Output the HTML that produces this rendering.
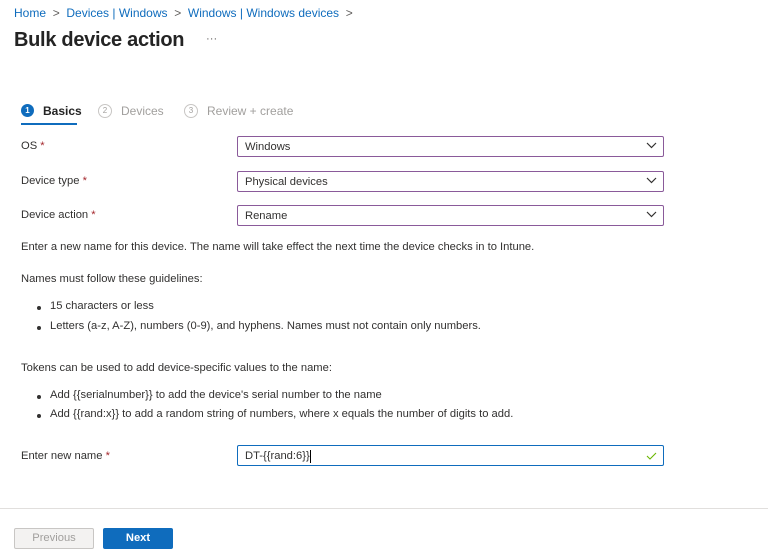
<!DOCTYPE html><html><head><style>
body{margin:0;width:768px;height:557px;background:#fff;font-family:"Liberation Sans",sans-serif;color:#323130;position:relative;overflow:hidden}
.a{position:absolute;white-space:nowrap;font-size:11.2px}
.bc{color:#0f6cbd;font-size:12px}
.req{color:#a4262c}
.dd{position:absolute;left:237px;height:19px;border:1px solid #8a5a9a;border-radius:2px;font-size:11.2px;line-height:20px;padding-left:7px;box-sizing:content-box;width:418px}
.chev{position:absolute;right:6px;top:5px}
.li::before{content:"";position:absolute;left:-13px;top:6px;width:4px;height:4px;border-radius:50%;background:#323130}
.circ{position:absolute;width:13px;height:13px;border-radius:50%;font-size:8px;line-height:13px;text-align:center}
</style></head><body>
<div class="a bc" style="left:14px;top:6px">Home &nbsp;<span style="color:#605e5c">&gt;</span>&nbsp; Devices | Windows &nbsp;<span style="color:#605e5c">&gt;</span>&nbsp; Windows | Windows devices &nbsp;<span style="color:#605e5c">&gt;</span></div>
<div class="a" style="left:14px;top:29px;font-size:20px;font-weight:bold;color:#242424;letter-spacing:-0.3px">Bulk device action</div>
<div class="a" style="left:206px;top:33px;color:#605e5c">···</div>
<div class="circ" style="left:21px;top:104px;background:#0f6cbd;color:#fff;font-weight:bold">1</div>
<div class="a" style="left:43px;top:104px;font-weight:bold;color:#242424;font-size:12px">Basics</div>
<div style="position:absolute;left:21px;top:123px;width:56px;height:2px;background:#0f6cbd"></div>
<div class="circ" style="left:98px;top:104px;border:1px solid #c8c6c4;color:#a19f9d;width:12px;height:12px;line-height:12px">2</div>
<div class="a" style="left:121px;top:104px;color:#a19f9d;font-size:12px">Devices</div>
<div class="circ" style="left:184px;top:104px;border:1px solid #c8c6c4;color:#a19f9d;width:12px;height:12px;line-height:12px">3</div>
<div class="a" style="left:207px;top:104px;color:#a19f9d;font-size:12px">Review + create</div>

<div class="a" style="left:21px;top:140px">OS <span class="req">*</span></div>
<div class="dd" style="top:136px">Windows<svg class="chev" width="11" height="7"><path d="M1 1l4.5 4.5L10 1" fill="none" stroke="#323130" stroke-width="1.2"/></svg></div>
<div class="a" style="left:21px;top:175px">Device type <span class="req">*</span></div>
<div class="dd" style="top:171px">Physical devices<svg class="chev" width="11" height="7"><path d="M1 1l4.5 4.5L10 1" fill="none" stroke="#323130" stroke-width="1.2"/></svg></div>
<div class="a" style="left:21px;top:209px">Device action <span class="req">*</span></div>
<div class="dd" style="top:205px">Rename<svg class="chev" width="11" height="7"><path d="M1 1l4.5 4.5L10 1" fill="none" stroke="#323130" stroke-width="1.2"/></svg></div>

<div class="a" style="left:21px;top:241px">Enter a new name for this device. The name will take effect the next time the device checks in to Intune.</div>
<div class="a" style="left:21px;top:273px">Names must follow these guidelines:</div>
<div class="a li" style="left:50px;top:300px">15 characters or less</div>
<div class="a li" style="left:50px;top:320px">Letters (a-z, A-Z), numbers (0-9), and hyphens. Names must not contain only numbers.</div>
<div class="a" style="left:21px;top:362px">Tokens can be used to add device-specific values to the name:</div>
<div class="a li" style="left:50px;top:389px">Add {{serialnumber}} to add the device's serial number to the name</div>
<div class="a li" style="left:50px;top:408px">Add {{rand:x}} to add a random string of numbers, where x equals the number of digits to add.</div>

<div class="a" style="left:21px;top:450px">Enter new name <span class="req">*</span></div>
<div class="dd" style="top:445px;border-color:#0f6cbd">DT-{{rand:6}}<span style="border-left:1px solid #000;height:13px;display:inline-block;vertical-align:middle"></span><svg class="chev" style="top:6px" width="11" height="8"><path d="M1 4l3 3 6-6" fill="none" stroke="#6bb700" stroke-width="1.1"/></svg></div>

<div style="position:absolute;left:0;top:508px;width:768px;height:1px;background:#e1dfdd"></div>
<div style="position:absolute;left:14px;top:528px;width:78px;height:19px;border:1px solid #c8c6c4;background:#f3f2f1;border-radius:2px;color:#a19f9d;font-size:11.2px;text-align:center;line-height:19px">Previous</div>
<div style="position:absolute;left:103px;top:528px;width:70px;height:21px;background:#0f6cbd;border-radius:2px;color:#fff;font-size:11.2px;font-weight:bold;text-align:center;line-height:21px">Next</div>
</body></html>
